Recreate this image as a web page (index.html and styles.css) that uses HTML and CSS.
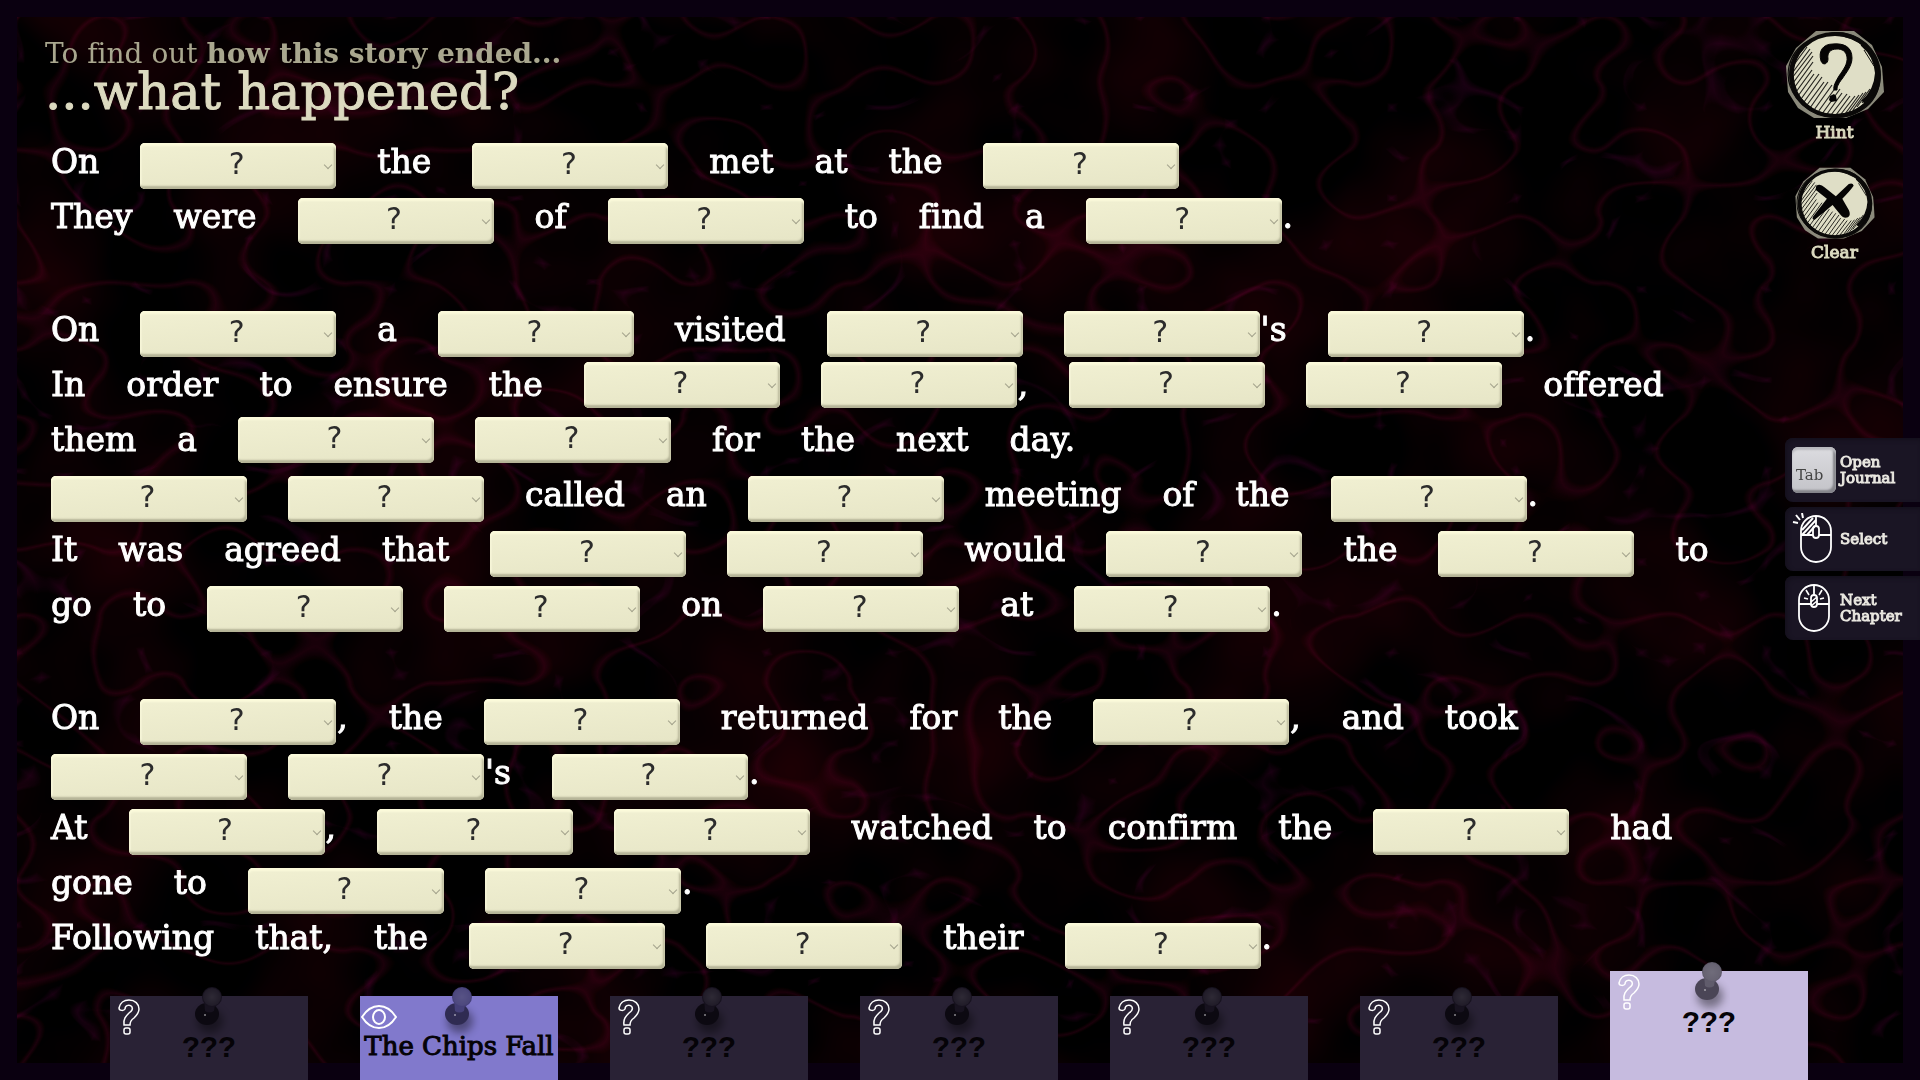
FILE: index.html
```html
<!DOCTYPE html>
<html lang="en">
<head>
    <meta charset="UTF-8">
    <meta name="viewport" content="width=device-width, initial-scale=1.0">
    <title>The Chips Fall</title>
    <link rel="stylesheet" href="styles.css">
</head>
<body>
    <!-- Veined backdrop -->
    <svg class="backdrop" aria-hidden="true">
        <filter id="clouds" x="0" y="0" width="100%" height="100%" color-interpolation-filters="sRGB">
            <feTurbulence type="fractalNoise" baseFrequency="0.006" numOctaves="3" seed="7"/>
            <feColorMatrix values="0 0 0 0.22 -0.09  0 0 0 0 0  0 0 0 0.03 -0.01  0 0 0 0 1"/>
        </filter>
        <filter id="threads" x="0" y="0" width="100%" height="100%" color-interpolation-filters="sRGB">
            <feTurbulence type="turbulence" baseFrequency="0.012 0.015" numOctaves="1" seed="21"/>
            <feColorMatrix values="0 0 0 -1.8 0.1  0 0 0 0 0  0 0 0 -0.9 0.04  0 0 0 0 1"/>
        </filter>
        <filter id="fine" x="0" y="0" width="100%" height="100%" color-interpolation-filters="sRGB">
            <feTurbulence type="turbulence" baseFrequency="0.008 0.011" numOctaves="2" seed="4"/>
            <feColorMatrix values="0 0 0 -1.5 0.1  0 0 0 0 0  0 0 0 -1.1 0.07  0 0 0 0 1"/>
        </filter>
        <rect width="100%" height="100%" filter="url(#clouds)"/>
        <rect class="threads" width="100%" height="100%" filter="url(#threads)"/>
        <rect class="threads" width="100%" height="100%" filter="url(#fine)"/>
    </svg>

    <!-- Shared drawings -->
    <svg class="defs" aria-hidden="true">
        <defs>
            <radialGradient id="pinhead"><stop offset="0" stop-color="#fff" stop-opacity=".1"/><stop offset="1" stop-color="#fff" stop-opacity=".04"/></radialGradient>
            <filter id="soft" x="-50%" y="-50%" width="200%" height="200%"><feGaussianBlur stdDeviation="4"/></filter>
            <symbol id="pin" viewBox="0 0 40 56">
                <ellipse cx="20" cy="34" rx="13" ry="12" fill="#000" opacity=".4" filter="url(#soft)"/>
                <ellipse cx="17" cy="27" rx="12" ry="11" class="pin-base"/>
                <path d="M14 12h12l-2 12q-5 3-9 0z" class="pin-stem"/>
                <circle cx="22" cy="10" r="10" class="pin-stem"/>
                <circle cx="22" cy="10" r="9" fill="url(#pinhead)"/>
                <circle cx="15" cy="28" r="1" fill="#fff" opacity=".5"/>
            </symbol>
            <symbol id="ask" viewBox="0 0 22 36">
                <path d="M1 9C2 4 6 1 11 1c6 0 10 4 10 9 0 4-2 6-5 9-3 2-4 4-4 7H6c-1-6 2-9 5-12 3-2 4-4 3-6-2-3-7-2-7 2-1 2-6 2-6-1z" fill="none" stroke="#fff" stroke-width="1.5"/>
                <rect x="6" y="29" width="6" height="6" rx="2" fill="none" stroke="#fff" stroke-width="1.5"/>
            </symbol>
            <symbol id="disc" viewBox="0 0 98 90">
                <path d="M30 1h38l18 14 10 22 2 25-16 17-22 9-32 0-16-10L2 62 0 36l10-18z" fill="#8b8a7b"/>
                <ellipse cx="49" cy="45" rx="44" ry="41" fill="#dfdec6"/>
                <g stroke="#25241f" stroke-width="1.2" fill="none">
                    <path d="M7 36l14-19M7 42l17-23M6 48l20-26M7 53l20-27M8 58l19-26M10 62l16-22M12 66l16-22M15 69l18-25M18 72l18-25M21 75l17-23M24 78l18-26M28 80l18-25M32 82l18-25M36 84l18-25M41 84l15-21M45 85l16-21M50 85l14-19M55 84l14-18M59 84l14-19M63 82l14-19M67 80l13-18M71 77l13-18M76 73l10-14"/>
                </g>
                <g stroke="#0b0a09" fill="none">
                    <ellipse cx="49" cy="45" rx="44" ry="41" stroke-width="4"/>
                    <ellipse cx="48" cy="46" rx="46" ry="41" stroke-width="1.2" transform="rotate(12 48 46)"/>
                    <ellipse cx="50" cy="44" rx="43" ry="41" stroke-width="1.5" transform="rotate(-14 50 44)"/>
                    <path d="M76 14q14 12 15 29-1 18-14 29" stroke-width="4"/>
                    <path d="M80 18l10 16M78 20l10 16" stroke-width="1"/>
                </g>
            </symbol>
            <symbol id="mouse" viewBox="0 0 38 52">
                <g fill="none" stroke="#fff" stroke-width="1.8">
                    <rect x="5" y="3" width="30" height="46" rx="15"/>
                    <path d="M5 22h12M23 22h12M20 3v10"/>
                    <rect x="17" y="13" width="6" height="12" rx="3"/>
                </g>
            </symbol>
        </defs>
    </svg>

    <div class="page">
        <main class="story">
            <header class="heading">
                <p class="lead">To find out <b>how this story ended...</b></p>
                <h1>...what happened?</h1>
            </header>

            <!-- The first meeting -->
            <section class="paragraph">
                <div class="line">
                    <span>On</span>
                    <span class="slot"><select aria-label="Day"><option>?</option></select></span>
                    <span>the</span>
                    <span class="slot"><select aria-label="Group"><option>?</option></select></span>
                    <span>met</span><span>at</span><span>the</span>
                    <span class="slot"><select aria-label="Place"><option>?</option></select></span>
                </div>
                <div class="line">
                    <span>They</span><span>were</span>
                    <span class="slot"><select aria-label="State"><option>?</option></select></span>
                    <span>of</span>
                    <span class="slot"><select aria-label="Subject"><option>?</option></select></span>
                    <span>to</span><span>find</span><span>a</span>
                    <span class="slot"><select aria-label="Object"><option>?</option></select>.</span>
                </div>
            </section>

            <!-- The visit and the offer -->
            <section class="paragraph">
                <div class="line">
                    <span>On</span>
                    <span class="slot"><select aria-label="Day"><option>?</option></select></span>
                    <span>a</span>
                    <span class="slot"><select aria-label="Visitor"><option>?</option></select></span>
                    <span>visited</span>
                    <span class="slot"><select aria-label="First name"><option>?</option></select></span>
                    <span class="slot"><select aria-label="Last name"><option>?</option></select>'s</span>
                    <span class="slot"><select aria-label="Place"><option>?</option></select>.</span>
                </div>
                <div class="line raised">
                    <span>In</span><span>order</span><span>to</span><span>ensure</span><span>the</span>
                    <span class="slot"><select aria-label="Subject"><option>?</option></select></span>
                    <span class="slot"><select aria-label="Outcome"><option>?</option></select>,</span>
                    <span class="slot"><select aria-label="First name"><option>?</option></select></span>
                    <span class="slot"><select aria-label="Last name"><option>?</option></select></span>
                    <span>offered</span>
                </div>
                <div class="line raised">
                    <span>them</span><span>a</span>
                    <span class="slot"><select aria-label="Kind"><option>?</option></select></span>
                    <span class="slot"><select aria-label="Object"><option>?</option></select></span>
                    <span>for</span><span>the</span><span>next</span><span>day.</span>
                </div>
                <div class="line">
                    <span class="slot"><select aria-label="First name"><option>?</option></select></span>
                    <span class="slot"><select aria-label="Last name"><option>?</option></select></span>
                    <span>called</span><span>an</span>
                    <span class="slot"><select aria-label="Kind"><option>?</option></select></span>
                    <span>meeting</span><span>of</span><span>the</span>
                    <span class="slot"><select aria-label="Group"><option>?</option></select>.</span>
                </div>
                <div class="line">
                    <span>It</span><span>was</span><span>agreed</span><span>that</span>
                    <span class="slot"><select aria-label="First name"><option>?</option></select></span>
                    <span class="slot"><select aria-label="Last name"><option>?</option></select></span>
                    <span>would</span>
                    <span class="slot"><select aria-label="Action"><option>?</option></select></span>
                    <span>the</span>
                    <span class="slot"><select aria-label="Object"><option>?</option></select></span>
                    <span>to</span>
                </div>
                <div class="line">
                    <span>go</span><span>to</span>
                    <span class="slot"><select aria-label="Place"><option>?</option></select></span>
                    <span class="slot"><select aria-label="Place detail"><option>?</option></select></span>
                    <span>on</span>
                    <span class="slot"><select aria-label="Day"><option>?</option></select></span>
                    <span>at</span>
                    <span class="slot"><select aria-label="Time"><option>?</option></select>.</span>
                </div>
            </section>

            <!-- The return -->
            <section class="paragraph">
                <div class="line">
                    <span>On</span>
                    <span class="slot"><select aria-label="Day"><option>?</option></select>,</span>
                    <span>the</span>
                    <span class="slot"><select aria-label="Person"><option>?</option></select></span>
                    <span>returned</span><span>for</span><span>the</span>
                    <span class="slot"><select aria-label="Object"><option>?</option></select>,</span>
                    <span>and</span><span>took</span>
                </div>
                <div class="line">
                    <span class="slot"><select aria-label="First name"><option>?</option></select></span>
                    <span class="slot"><select aria-label="Last name"><option>?</option></select>'s</span>
                    <span class="slot"><select aria-label="Object"><option>?</option></select>.</span>
                </div>
                <div class="line">
                    <span>At</span>
                    <span class="slot"><select aria-label="Time"><option>?</option></select>,</span>
                    <span class="slot"><select aria-label="First name"><option>?</option></select></span>
                    <span class="slot"><select aria-label="Last name"><option>?</option></select></span>
                    <span>watched</span><span>to</span><span>confirm</span><span>the</span>
                    <span class="slot"><select aria-label="Object"><option>?</option></select></span>
                    <span>had</span>
                </div>
                <div class="line lowered">
                    <span>gone</span><span>to</span>
                    <span class="slot"><select aria-label="Place"><option>?</option></select></span>
                    <span class="slot"><select aria-label="Place detail"><option>?</option></select>.</span>
                </div>
                <div class="line lowered">
                    <span>Following</span><span>that,</span><span>the</span>
                    <span class="slot"><select aria-label="Group"><option>?</option></select></span>
                    <span class="slot"><select aria-label="Action"><option>?</option></select></span>
                    <span>their</span>
                    <span class="slot"><select aria-label="Object"><option>?</option></select>.</span>
                </div>
            </section>
        </main>

        <aside class="side">
            <div class="tools">
                <button class="tool" type="button">
                    <svg width="98" height="90" viewBox="0 0 98 90" aria-hidden="true">
                        <use href="#disc" width="98" height="90"/>
                        <path d="M35 31C32 21 37 14 47 14c11-1 19 3 19 14 0 8-6 15-10 21-4 5-5 8-5 11h-3c-1-4 2-9 5-14 4-6 9-12 8-19-1-6-5-8-10-8-7 0-10 4-9 10 0 5-5 7-7 2z" fill="#050404" stroke="#050404"/>
                        <path d="M44 66l4-2 2 2 1 5-6 1-2-2z" fill="#050404"/>
                    </svg>
                    Hint
                </button>
                <button class="tool" type="button">
                    <svg width="80" height="73" viewBox="0 0 98 90" aria-hidden="true">
                        <use href="#disc" width="98" height="90"/>
                        <path d="M26 23q5-3 10 2l14 11 16-15q5-2 6 2-5 7-14 16l8 14q3 6-1 9-6 2-10-4l-9-11-22 18q-4 0-2-4l17-22-14-11z" fill="#050404"/>
                    </svg>
                    Clear
                </button>
            </div>
            <div class="hints">
                <button class="hint" type="button"><kbd>Tab</kbd><span>Open<br>Journal</span></button>
                <button class="hint" type="button">
                    <svg width="44" height="52" viewBox="-4 0 44 52" aria-hidden="true">
                        <use href="#mouse" width="38" height="52"/>
                        <path d="M6 17L17 5M6 22L20 7M11 22l8-9M-3 9l5 1M0 2l4 5M6 0l1 5" fill="none" stroke="#fff" stroke-width="2"/>
                    </svg>
                    <span>Select</span>
                </button>
                <button class="hint" type="button">
                    <svg width="44" height="52" viewBox="-2 0 44 52" aria-hidden="true">
                        <use href="#mouse" width="38" height="52"/>
                        <path d="M17 20l6-5M17 24l6-5M12 8l3 5M28 8l-3 5M10 16l4 1M30 16l-4 1" fill="none" stroke="#fff" stroke-width="1.6"/>
                    </svg>
                    <span>Next<br>Chapter</span>
                </button>
            </div>
        </aside>
    </div>

    <!-- Chapter notes along the bottom -->
    <nav class="chapters">
        <button class="note" type="button"><svg class="pin"><use href="#pin"/></svg><svg class="ask"><use href="#ask"/></svg>???</button>
        <button class="note current" type="button">
            <svg class="pin"><use href="#pin"/></svg>
            <svg class="eye" viewBox="0 0 36 24"><path d="M1 12Q8 1 18 1t17 11Q28 23 18 23T1 12z" fill="none" stroke="#fff" stroke-width="2"/><ellipse cx="18" cy="12" rx="6" ry="7" fill="none" stroke="#fff" stroke-width="2"/></svg>
            The Chips Fall
        </button>
        <button class="note" type="button"><svg class="pin"><use href="#pin"/></svg><svg class="ask"><use href="#ask"/></svg>???</button>
        <button class="note" type="button"><svg class="pin"><use href="#pin"/></svg><svg class="ask"><use href="#ask"/></svg>???</button>
        <button class="note" type="button"><svg class="pin"><use href="#pin"/></svg><svg class="ask"><use href="#ask"/></svg>???</button>
        <button class="note" type="button"><svg class="pin"><use href="#pin"/></svg><svg class="ask"><use href="#ask"/></svg>???</button>
        <button class="note final" type="button"><svg class="pin"><use href="#pin"/></svg><svg class="ask"><use href="#ask"/></svg>???</button>
    </nav>
</body>
</html>
```

FILE: styles.css
```css
* {
    box-sizing: border-box;
}
body {
    display: flex;
    flex-direction: column;
    min-height: 100vh;
    margin: 0;
    background-color: #0a0010;
    color: #fff;
    font-family: "DejaVu Serif", serif;
    font-variant-ligatures: none;
}
button, select {
    margin: 0;
    padding: 0;
    border: none;
    background: none;
    color: inherit;
    font-family: inherit;
    cursor: pointer;
}
/* Backdrop */
.backdrop {
    position: fixed;
    top: 17px;
    left: 17px;
    z-index: -1;
    width: calc(100% - 34px);
    height: calc(100% - 34px);
    background-color: #020001;
}
.threads {
    mix-blend-mode: screen;
}
.defs {
    position: absolute;
    width: 0;
    height: 0;
}
.page {
    display: flex;
    flex: 1;
    justify-content: space-between;
}
/* Story text */
.story {
    flex: 1;
    padding: 38px 0 0 51px;
}
.heading {
    margin: 0 0 20px -6px;
    color: #dcdac0;
}
.lead {
    margin: 0;
    color: #a9a78f;
    font-size: 28px;
    line-height: 32px;
}
h1 {
    margin: 0;
    font-size: 51px;
    font-weight: normal;
    line-height: 44px;
    -webkit-text-stroke: 1px;
}
.paragraph {
    margin-bottom: 58px;
}
.paragraph:last-child {
    margin-bottom: 0;
}
.line {
    display: flex;
    align-items: center;
    gap: 41px;
    height: 55px;
    font-size: 33px;
    line-height: 55px;
    white-space: nowrap;
    -webkit-text-stroke: 1px;
}
/* Drop-down slots */
.slot {
    position: relative;
    display: flex;
    align-items: flex-start;
    gap: 1px;
    height: 55px;
}
.slot select {
    appearance: none;
    width: 196px;
    height: 46px;
    margin-top: 9px;
    padding: 0 3px 6px 0;
    border-radius: 5px;
    background: linear-gradient(175deg, #f1f0d2, #e6e5c6);
    box-shadow: inset 0 3px 2px #fbfadb, inset -2px -3px 2px #b5b497, inset 2px 0 1px #f4f3d6;
    color: #2c2c2c;
    font-family: "DejaVu Sans", sans-serif;
    font-size: 30px;
    text-align: center;
    text-align-last: center;
    -webkit-text-stroke: 0;
}
.slot::after {
    content: "";
    position: absolute;
    top: 28px;
    left: 185px;
    width: 5px;
    height: 5px;
    border: solid #a3a28c;
    border-width: 0 1px 1px 0;
    transform: rotate(45deg);
    pointer-events: none;
}
.raised select {
    margin-top: 5px;
}
.raised .slot::after {
    top: 24px;
}
.lowered select {
    margin-top: 13px;
}
.lowered .slot::after {
    top: 32px;
}
/* Side column */
.side {
    display: flex;
    flex-direction: column;
    width: 135px;
    padding-top: 30px;
}
.tools {
    display: flex;
    flex-direction: column;
    align-items: center;
    gap: 24px;
    height: 408px;
    padding-right: 36px;
}
.tool {
    display: flex;
    flex-direction: column;
    align-items: center;
    gap: 1px;
    color: #dcdac0;
    font-size: 17px;
    line-height: 22px;
}
.hints {
    display: flex;
    flex-direction: column;
    gap: 5px;
}
.hint {
    display: flex;
    align-items: center;
    gap: 4px;
    height: 64px;
    padding-left: 7px;
    border-radius: 8px 0 0 8px;
    background-color: #1a1524;
    box-shadow: inset 2px 2px 4px #14101c;
    color: #e9e7e0;
    font-size: 15px;
    line-height: 16px;
    text-align: left;
}
.tool, .hint span {
    -webkit-text-stroke: 1px;
}
kbd {
    width: 44px;
    height: 46px;
    padding: 12px 0 0 4px;
    border-radius: 6px;
    background: linear-gradient(#dcdce0, #c3c3c8);
    box-shadow: inset 0 3px 2px #b9b9be, inset -3px -3px 2px #85858b;
    color: #444;
    font-family: inherit;
    font-size: 15px;
    line-height: 32px;
}
/* Chapter notes */
.chapters {
    display: flex;
    justify-content: space-between;
    align-items: flex-end;
    padding: 0 112px 0 110px;
}
.note {
    --pin-base: #0c0911;
    --pin-stem: #17121f;
    position: relative;
    width: 198px;
    height: 84px;
    padding-top: 22px;
    background-color: #292235;
    color: #050307;
    font-family: "Liberation Mono", monospace;
    font-size: 30px;
    font-weight: bold;
    white-space: nowrap;
}
.current {
    --pin-base: #2f2b52;
    --pin-stem: #454078;
    padding-top: 16px;
    background-color: #8179cc;
    font-family: "DejaVu Serif", serif;
    font-size: 26px;
    font-weight: normal;
    -webkit-text-stroke: 1px;
}
.final {
    --pin-base: #4a4556;
    --pin-stem: #605c6c;
    height: 109px;
    padding-bottom: 25px;
    background-color: #c6bbdf;
}
.pin {
    position: absolute;
    top: -9px;
    left: 80px;
    width: 40px;
    height: 56px;
}
.pin-base {
    fill: var(--pin-base);
}
.pin-stem {
    fill: var(--pin-stem);
}
.ask {
    position: absolute;
    top: 3px;
    left: 8px;
    width: 22px;
    height: 36px;
}
.eye {
    position: absolute;
    top: 9px;
    left: 1px;
    width: 36px;
    height: 24px;
}
```
